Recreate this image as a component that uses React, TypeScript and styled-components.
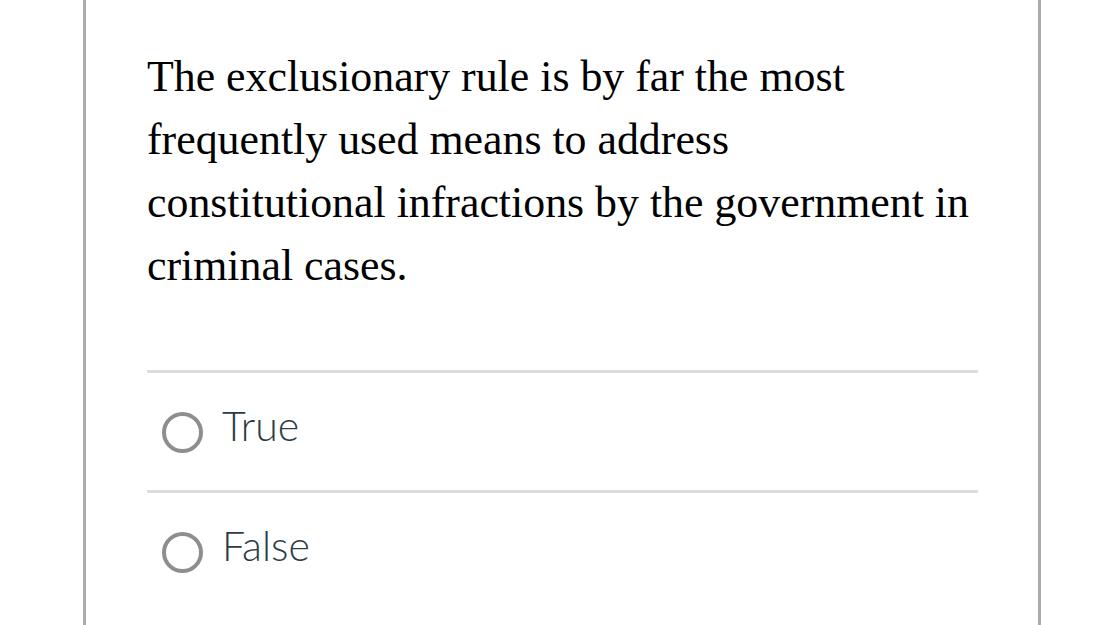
import React from "react";
import styled, { createGlobalStyle } from "styled-components";

const Global = createGlobalStyle`
  html, body { margin: 0; padding: 0; background: #ffffff; }
  body { overflow: hidden; }
`;

const Page = styled.div`
  width: 1116px;
  height: 625px;
  overflow: hidden;
  background: #ffffff;
`;

const Card = styled.div`
  margin-left: 83px;
  width: 958px;
  min-height: 625px;
  box-sizing: border-box;
  border-left: 3px solid #ababab;
  border-right: 3px solid #ababab;
  padding: 45px 60px 0 61px;
`;

const Question = styled.p`
  margin: 0;
  font-family: "Liberation Serif", "Times New Roman", serif;
  font-size: 43.85px;
  line-height: 63px;
  color: #000000;
  padding-right: 6px;
`;

const Answers = styled.div`
  margin-top: 73px;
  display: flex;
  flex-direction: column;
`;

const Answer = styled.label`
  display: flex;
  align-items: flex-start;
  height: 120px;
  box-sizing: border-box;
  border-top: 3px solid #dcdcdc;
  padding: 29px 0 0 15px;
  gap: 19px;
  cursor: pointer;
`;

const Radio = styled.span`
  flex: none;
  width: 41px;
  height: 41px;
  margin-top: 10px;
  box-sizing: border-box;
  border: 4px solid #8e8e8e;
  border-radius: 50%;
  background: #ffffff;
`;

const AnswerText = styled.span`
  font-family: Lato, "Noto Sans", sans-serif;
  font-weight: 300;
  font-size: 41px;
  line-height: 48px;
  color: #2d3b45;
`;

export default function App() {
  const answers = ["True", "False"];
  return (
    <Page>
      <Global />
      <Card>
        <Question>
          The exclusionary rule is by far the most frequently used means to
          address constitutional infractions by the government in criminal
          cases.
        </Question>
        <Answers>
          {answers.map((a) => (
            <Answer key={a}>
              <Radio />
              <AnswerText>{a}</AnswerText>
            </Answer>
          ))}
        </Answers>
      </Card>
    </Page>
  );
}
